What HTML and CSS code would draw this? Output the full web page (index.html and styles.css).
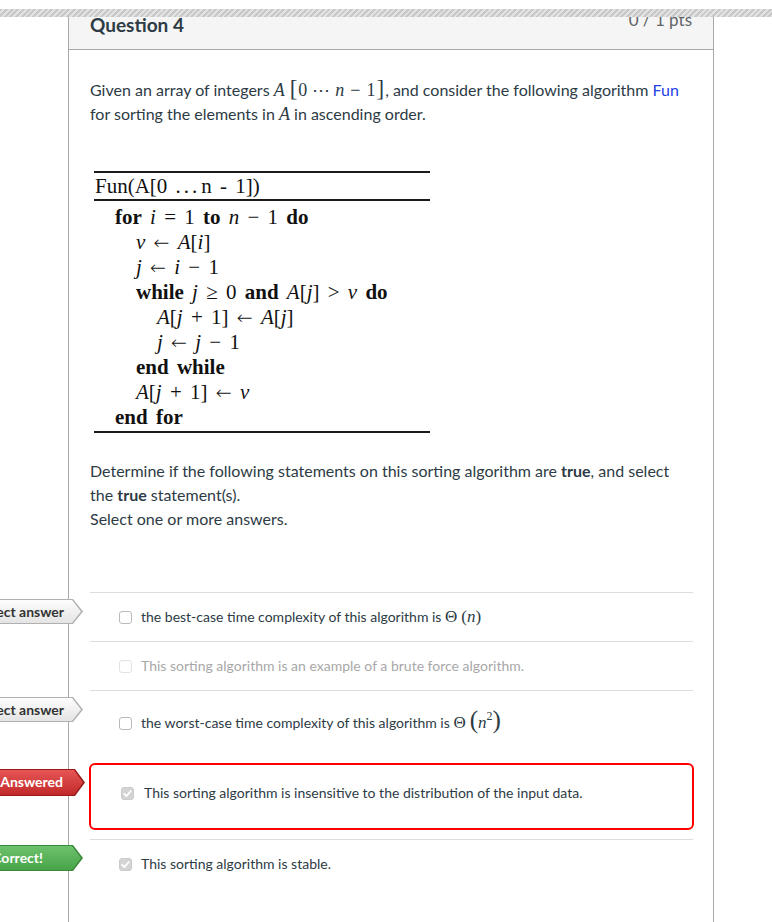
FILE: index.html
```html
<!DOCTYPE html>
<html lang="en">
<head>
<meta charset="utf-8">
<title>Question 4</title>
<link rel="stylesheet" href="styles.css">
</head>
<body>
<div class="topbar"><div class="stripe"></div></div>
<div class="card">
  <div class="card-header">
    <h2 class="q-title">Question 4</h2>
    <span class="pts">0 / 1 pts</span>
  </div>
  <div class="card-body">
    <p class="q-text">Given an array of integers <span class="m"><i>A</i><span class="br br-l">[</span>0<span class="cdots">⋯</span><i>n</i><span class="bin">−</span>1<span class="br">]</span></span>, and consider the following algorithm <span class="fun">Fun</span><br>for sorting the elements in <span class="m"><i>A</i></span> in ascending order.</p>

    <div class="algo">
      <div class="algo-head">Fun(A[0 <span class="dots">...</span>n - 1])</div>
      <div class="algo-body">
        <div class="ln i1"><b>for</b> <i>i</i> = 1 <b>to</b> <i>n</i> − 1 <b>do</b></div>
        <div class="ln i2"><i>v</i> <span class="arr">←</span> <i>A</i>[<i>i</i>]</div>
        <div class="ln i2"><i>j</i> <span class="arr">←</span> <i>i</i> − 1</div>
        <div class="ln i2"><b>while</b> <i>j</i> ≥ 0 <b>and</b> <i>A</i>[<i>j</i>] &gt; <i>v</i> <b>do</b></div>
        <div class="ln i3"><i>A</i>[<i>j</i> + 1] <span class="arr">←</span> <i>A</i>[<i>j</i>]</div>
        <div class="ln i3"><i>j</i> <span class="arr">←</span> <i>j</i> − 1</div>
        <div class="ln i2"><b>end while</b></div>
        <div class="ln i2"><i>A</i>[<i>j</i> + 1] <span class="arr">←</span> <i>v</i></div>
        <div class="ln i1"><b>end for</b></div>
      </div>
    </div>

    <p class="q-text q-gap">Determine if the following statements on this sorting algorithm are <b>true</b>, and select<br>the <b>true</b> statement(s).<br>Select one or more answers.</p>

    <div class="answers">
      <div class="answer">
        <div class="arrow arrow-gray"><span>Correct answer</span></div>
        <span class="cb"></span>
        <span class="a-text">the best-case time complexity of this algorithm is <span class="am">Θ<span class="gap"></span>(<i>n</i>)</span></span>
      </div>
      <div class="answer muted">
        <span class="cb cb-disabled"></span>
        <span class="a-text">This sorting algorithm is an example of a brute force algorithm.</span>
      </div>
      <div class="answer tall">
        <div class="arrow arrow-gray"><span>Correct answer</span></div>
        <span class="cb"></span>
        <span class="a-text">the worst-case time complexity of this algorithm is <span class="am">Θ<span class="gap"></span><span class="bp">(</span><i>n</i><sup>2</sup><span class="bp">)</span></span></span>
      </div>
      <div class="answer wrong">
        <div class="arrow arrow-red"><span>Answered</span></div>
        <span class="cb cb-checked"><svg viewBox="0 0 11 11"><polyline points="2.2,5.8 4.5,8 8.8,3" fill="none" stroke="#fff" stroke-width="1.8" stroke-linecap="round" stroke-linejoin="round"/></svg></span>
        <span class="a-text">This sorting algorithm is insensitive to the distribution of the input data.</span>
      </div>
      <div class="answer last">
        <div class="arrow arrow-green"><span>Correct!</span></div>
        <span class="cb cb-checked"><svg viewBox="0 0 11 11"><polyline points="2.2,5.8 4.5,8 8.8,3" fill="none" stroke="#fff" stroke-width="1.8" stroke-linecap="round" stroke-linejoin="round"/></svg></span>
        <span class="a-text">This sorting algorithm is stable.</span>
      </div>
    </div>
  </div>
</div>
</body>
</html>
```
FILE: styles.css
```css
* { box-sizing: border-box; }
html, body { margin: 0; padding: 0; }
body {
  background: #fff;
  font-family: Lato, "Open Sans", "Noto Sans", sans-serif;
  color: #2d3b45;
  height: 922px;
  overflow: hidden;
  position: relative;
}

.topbar {
  position: absolute;
  top: 0; left: 0; right: 0;
  height: 17px;
  padding-top: 9px;
  background: #fff;
  z-index: 10;
}
.stripe {
  height: 8px;
  background: repeating-linear-gradient(135deg, #c8c8c8 0 2px, #e2e2e2 2px 4px);
}

.card {
  margin-left: 68px;
  width: 646px;
  min-height: 922px;
  border-left: 1px solid #a8a8a8;
  border-right: 1px solid #a8a8a8;
  background: #fff;
}
.card-header {
  height: 50px;
  background: #f5f5f5;
  border-bottom: 1px solid #a8a8a8;
  display: flex;
  justify-content: space-between;
  align-items: flex-start;
  padding: 0 21px;
}
.q-title {
  margin: 13px 0 0;
  font-size: 19px;
  line-height: 23px;
  font-weight: 700;
  color: #2d3b45;
}
.pts {
  margin-top: 10px;
  font-size: 17px;
  line-height: 20px;
  color: #5f6468;
}

.card-body { padding: 28px 20px 0 21px; }

.q-text {
  margin: 0;
  font-size: 16px;
  line-height: 24px;
  white-space: nowrap;
}
.q-text b { font-weight: 700; }
.q-gap { margin-top: 26px; }
.fun { color: #1d3fe6; }

.m {
  font-family: "Liberation Serif", "Times New Roman", serif;
  font-size: 18px;
  line-height: 0;
}
.m i, .am i { font-style: italic; }
.br { font-size: 23px; margin: 0 1px; }
.br-l { margin-left: 5px; }
.cdots { margin: 0 5px; }
.bin { margin: 0 6px; }

.algo {
  margin: 45px 0 0 4px;
  width: 336px;
  border-top: 2px solid #1a1a1a;
  border-bottom: 2px solid #1a1a1a;
  font-family: "Liberation Serif", "Times New Roman", serif;
  font-size: 21px;
  color: #111;
  word-spacing: 3px;
}
.algo-head {
  height: 28px;
  line-height: 26px;
  border-bottom: 2px solid #1a1a1a;
  padding-left: 1px;
  word-spacing: 3px;
}
.dots { letter-spacing: 3px; margin-right: 1px; }
.algo-body { padding: 4px 0 1px; }
.ln { height: 25px; line-height: 25px; white-space: nowrap; }
.ln i { font-style: italic; }
.arr {
  font-family: "DejaVu Sans", sans-serif;
  font-size: 19px;
  font-weight: 300;
}
.i1 { padding-left: 21px; }
.i2 { padding-left: 42px; }
.i3 { padding-left: 63px; }

.answers { margin-top: 61px; }
.answer {
  position: relative;
  display: flex;
  align-items: center;
  height: 49px;
  border-top: 1px solid #ddd;
  padding-left: 29px;
  font-size: 14px;
  line-height: 18px;
}
.answer.tall { height: 73px; padding-bottom: 8px; }
.answer.wrong {
  height: 67px;
  border: 2px solid #f00;
  border-radius: 6px;
  margin: 0 -1px 9px;
  padding-left: 30px;
  padding-bottom: 7px;
}
.answer.wrong .cb { margin-right: 10px; }
.answer.muted { color: #a8a8a8; }
.a-text { white-space: nowrap; }

.am {
  font-family: "Liberation Serif", "Times New Roman", serif;
  font-size: 17px;
  line-height: 0;
}
.gap { display: inline-block; width: 4px; }
.bp { font-size: 25px; }
.am sup { font-size: 12px; line-height: 0; vertical-align: 8px; }

.cb {
  flex: none;
  width: 13px;
  height: 13px;
  border: 1px solid #b9b9b9;
  border-radius: 3px;
  background: #fff;
  margin-right: 9px;
  display: flex;
  align-items: center;
  justify-content: center;
}
.cb-disabled { border-color: #e3e3e3; }
.cb-checked { background: #d4d4d4; border-color: #cbcbcb; }
.cb-checked svg { width: 11px; height: 11px; display: block; }

.arrow {
  position: absolute;
  top: 6px;
  left: -167px;
  width: 160px;
  height: 25px;
  clip-path: polygon(0 0, 150px 0, 160px 50%, 150px 100%, 0 100%);
  background: #b0b0b0;
  font-size: 14px;
  font-weight: 700;
  line-height: 25px;
  text-align: right;
  white-space: nowrap;
}
.arrow::before {
  content: "";
  position: absolute;
  top: 1px; bottom: 1px; left: 0;
  width: 158px;
  clip-path: polygon(0 0, 149px 0, 158px 50%, 149px 100%, 0 100%);
  background: linear-gradient(#fdfdfd, #e4e4e4);
}
.arrow span { position: relative; color: #333; padding-right: 19px; }

.arrow-red { top: 4px; left: -166px; height: 27px; line-height: 26px; background: #9a1a1a; }
.arrow-red::before { background: linear-gradient(#e65555, #c22a2a); }
.arrow-red span { color: #fff; padding-right: 22px; }

.arrow-green { top: 5px; height: 26px; line-height: 25px; background: #3b873b; }
.arrow-green::before { background: linear-gradient(#6cc26c, #48a448); }
.arrow-green span { color: #fff; padding-right: 40px; }
```
